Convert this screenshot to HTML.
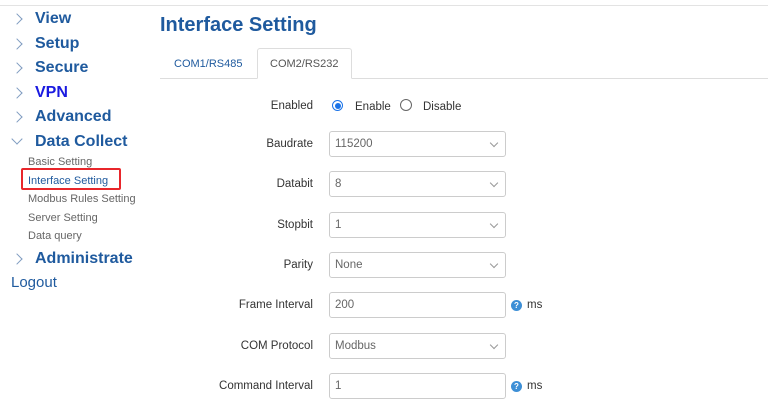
<!DOCTYPE html>
<html><head><style>
body{margin:0;width:768px;height:419px;overflow:hidden;background:#fff;font-family:"Liberation Sans",sans-serif;position:relative}
.a{position:absolute;white-space:nowrap}
.m{font-size:16px;font-weight:bold;color:#1f5a9e;left:35px}
.ch{position:absolute;left:13px;width:7px;height:7px;border-right:1px solid #7f9cc0;border-top:1px solid #7f9cc0;transform:rotate(45deg)}
.s{font-size:11px;color:#666;left:28px}
.l{font-size:11.5px;color:#333;text-align:right;right:455px}
.box{position:absolute;left:329px;border:1px solid #ccc;border-radius:3px;font-size:11.5px;color:#666;line-height:25px;padding-left:5px;box-sizing:border-box;width:177px;height:26px}
.dd{position:absolute;right:8px;top:8px;width:5px;height:5px;border-right:1px solid #999;border-bottom:1px solid #999;transform:rotate(45deg)}
.q{position:absolute;left:511px;width:11px;height:11px;border-radius:50%;background:#3d8fd6;color:#fff;font-size:8px;font-weight:bold;text-align:center;line-height:11px}
.ms{font-size:11.5px;color:#333;left:527px}
</style></head><body>
<div class="a" style="left:0;top:5px;width:768px;height:1px;background:#e3e3e3"></div>
<div class="ch" style="top:15px"></div><div class="a m" style="top:10px">View</div>
<div class="ch" style="top:40px"></div><div class="a m" style="top:35px">Setup</div>
<div class="ch" style="top:64px"></div><div class="a m" style="top:59px">Secure</div>
<div class="ch" style="top:89px"></div><div class="a m" style="top:84px;color:#1a1ae0">VPN</div>
<div class="ch" style="top:113px"></div><div class="a m" style="top:108px">Advanced</div>
<div class="ch" style="top:135px;transform:rotate(135deg)"></div><div class="a m" style="top:133px">Data Collect</div>
<div class="a s" style="top:156px">Basic Setting</div>
<div class="a" style="left:21px;top:168px;width:100px;height:22px;border:2px solid #e8262b;border-radius:2px;box-sizing:border-box"></div>
<div class="a s" style="top:175px;color:#1f5a9e">Interface Setting</div>
<div class="a s" style="top:193px">Modbus Rules Setting</div>
<div class="a s" style="top:212px">Server Setting</div>
<div class="a s" style="top:230px">Data query</div>
<div class="ch" style="top:255px"></div><div class="a m" style="top:250px">Administrate</div>
<div class="a" style="left:11px;top:274px;font-size:15px;color:#1f5a9e">Logout</div>

<div class="a" style="left:160px;top:14px;font-size:20px;font-weight:bold;color:#1f5a9e">Interface Setting</div>
<div class="a" style="left:160px;top:78px;width:608px;height:1px;background:#ddd"></div>
<div class="a" style="left:174px;top:58px;font-size:11px;color:#1f5a9e">COM1/RS485</div>
<div class="a" style="left:257px;top:48px;width:95px;height:31px;border:1px solid #ddd;border-bottom:1px solid #fff;border-radius:3px 3px 0 0;box-sizing:border-box;background:#fff"></div>
<div class="a" style="left:270px;top:58px;font-size:11px;color:#555">COM2/RS232</div>

<div class="a l" style="top:100px">Enabled</div>
<div class="a" style="left:332px;top:100px;width:9px;height:9px;border:1.5px solid #1a73e8;border-radius:50%"></div>
<div class="a" style="left:335px;top:103px;width:6px;height:6px;background:#1a73e8;border-radius:50%"></div>
<div class="a" style="left:355px;top:101px;font-size:11.5px;color:#333">Enable</div>
<div class="a" style="left:400px;top:99px;width:10px;height:10px;border:1px solid #666;border-radius:50%"></div>
<div class="a" style="left:423px;top:101px;font-size:11.5px;color:#333">Disable</div>

<div class="a l" style="top:138px">Baudrate</div><div class="box" style="top:131px">115200<div class="dd"></div></div>
<div class="a l" style="top:178px">Databit</div><div class="box" style="top:171px">8<div class="dd"></div></div>
<div class="a l" style="top:219px">Stopbit</div><div class="box" style="top:212px">1<div class="dd"></div></div>
<div class="a l" style="top:259px">Parity</div><div class="box" style="top:252px">None<div class="dd"></div></div>
<div class="a l" style="top:299px">Frame Interval</div><div class="box" style="top:292px">200</div>
<div class="q" style="top:300px">?</div><div class="a ms" style="top:299px">ms</div>
<div class="a l" style="top:340px">COM Protocol</div><div class="box" style="top:333px">Modbus<div class="dd"></div></div>
<div class="a l" style="top:380px">Command Interval</div><div class="box" style="top:373px">1</div>
<div class="q" style="top:381px">?</div><div class="a ms" style="top:380px">ms</div>
</body></html>
